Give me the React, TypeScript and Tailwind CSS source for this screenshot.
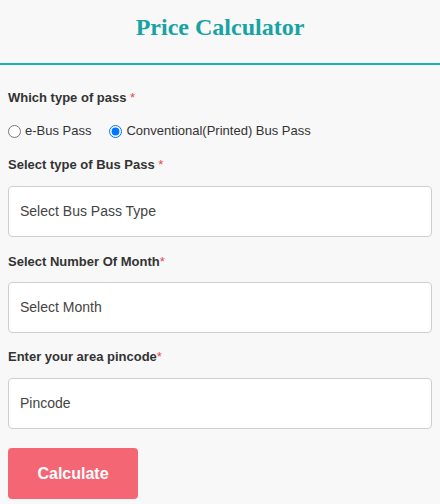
import React from 'react';

const Label: React.FC<{ text: string; gap?: boolean }> = ({ text, gap = true }) => (
    <div className="text-[13px] font-bold text-[#333] leading-[16px]">
        {text}
        {gap ? ' ' : ''}
        <span className="text-[#e8474f] font-normal">*</span>
    </div>
);

const Field: React.FC<{ placeholder: string }> = ({ placeholder }) => (
    <div className="h-[51px] bg-white border border-[#cfcfcf] rounded-[4px] flex items-center px-[11px] text-[14px] text-[#444]">
        {placeholder}
    </div>
);

export default function App() {
    return (
        <div className="w-[440px] h-[504px] bg-[#f8f8f8] overflow-hidden" style={{ fontFamily: '"Liberation Sans", Arial, sans-serif' }}>
            {/* Header */}
            <div className="h-[65px] border-b-2 border-[#1eb3b3] flex justify-center pt-[13px]">
                <h1 className="text-[24px] font-bold text-[#17a3a3] leading-[28px]" style={{ fontFamily: '"Liberation Serif", "Times New Roman", serif' }}>
                    Price Calculator
                </h1>
            </div>

            <div className="px-[8px] pt-[25px]">
                <Label text="Which type of pass" />
                <div className="flex items-center mt-[17px] text-[13px] text-[#333] leading-[16px]">
                    <label className="flex items-center">
                        <input type="radio" name="pass" className="m-0 w-[13px] h-[13px]" />
                        <span className="ml-[4px]">e-Bus Pass</span>
                    </label>
                    <label className="flex items-center ml-[18px]">
                        <input type="radio" name="pass" defaultChecked className="m-0 w-[13px] h-[13px]" />
                        <span className="ml-[4px]">Conventional(Printed) Bus Pass</span>
                    </label>
                </div>

                <div className="mt-[18px]">
                    <Label text="Select type of Bus Pass" />
                </div>
                <div className="mt-[13px]">
                    <Field placeholder="Select Bus Pass Type" />
                </div>

                <div className="mt-[17px]">
                    <Label text="Select Number Of Month" gap={false} />
                </div>
                <div className="mt-[12px]">
                    <Field placeholder="Select Month" />
                </div>

                <div className="mt-[16px]">
                    <Label text="Enter your area pincode" gap={false} />
                </div>
                <div className="mt-[13px]">
                    <Field placeholder="Pincode" />
                </div>

                <button className="mt-[19px] w-[130px] h-[51px] rounded-[4px] bg-[#f56674] text-white text-[16px] font-bold">
                    Calculate
                </button>
            </div>
        </div>
    );
}
